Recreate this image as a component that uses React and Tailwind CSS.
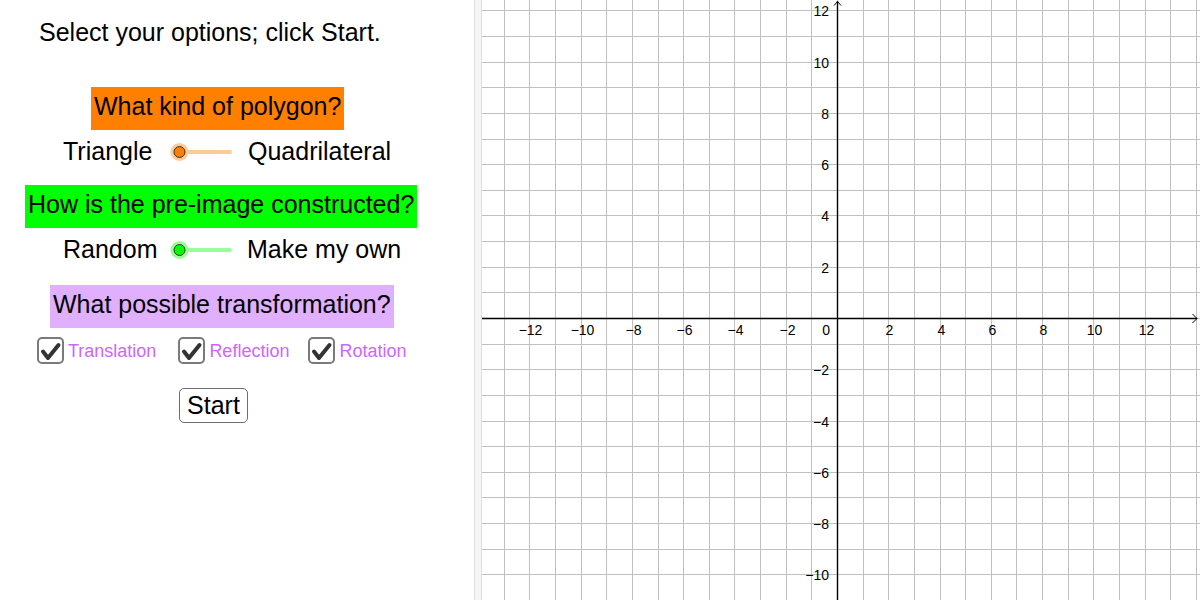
import React from 'react';

// graph geometry (pixels inside the graphics view)
const UNIT = 25.63;
const OX = 355;
const OY = 318;
const W = 718;
const H = 600;

const fmt = n => (n < 0 ? '\u2212' + Math.abs(n) : String(n));

const Slider = ({ knob, track }) => (
    <svg width="66" height="22" viewBox="0 0 66 22" className="shrink-0">
        <line x1="10.5" y1="11" x2="61" y2="11" stroke={track} strokeWidth="4" strokeLinecap="round" />
        <circle cx="10.5" cy="11" r="9" fill={track} />
        <circle cx="10.5" cy="11" r="5.5" fill={knob} stroke="#333" strokeWidth="1" />
    </svg>
);

const Check = ({ label, className = '' }) => (
    <div className={`flex items-center gap-[4px] ${className}`}>
        <svg width="27" height="27" viewBox="0 0 27 27" className="shrink-0">
            <rect x="1" y="1" width="25" height="25" rx="4" fill="white" stroke="#7a7a7a" strokeWidth="2" />
            <path d="M6 14.5 L11 21 L21.5 8" fill="none" stroke="#333" strokeWidth="4" strokeLinecap="round" strokeLinejoin="round" />
        </svg>
        <span className="text-[18px] leading-[21px] text-[#cc66ff] pt-[2px]">{label}</span>
    </div>
);

const Graph = () => {
    const cols = [];
    const rows = [];
    for (let i = -15; i <= 15; i++) {
        const x = Math.round(OX + i * UNIT) + 0.5;
        if (x > 0 && x < W) cols.push({ i, x });
        const y = Math.round(OY - i * UNIT) + 0.5;
        if (y > 0 && y < H) rows.push({ i, y });
    }
    const ax = Math.round(OX) + 0.5;
    const ay = Math.round(OY) + 0.5;

    return (
        <svg width={W} height={H} viewBox={`0 0 ${W} ${H}`} className="block">
            {cols.map(c => (
                <line key={'c' + c.i} x1={c.x} y1="0" x2={c.x} y2={H} stroke="#c0c0c0" strokeWidth="1" />
            ))}
            {rows.map(r => (
                <line key={'r' + r.i} x1="0" y1={r.y} x2={W} y2={r.y} stroke="#c0c0c0" strokeWidth="1" />
            ))}

            {/* axes */}
            <line x1="0" y1={ay} x2="715" y2={ay} stroke="#000" strokeWidth="1.4" />
            <line x1={ax} y1="1" x2={ax} y2={H} stroke="#000" strokeWidth="1.4" />
            <path d={`M710.5 ${ay - 4.5} L715 ${ay} L710.5 ${ay + 4.5}`} fill="none" stroke="#000" strokeWidth="1" />
            <path d={`M${ax - 3.5} 5.5 L${ax} 1.5 L${ax + 3.5} 5.5`} fill="none" stroke="#000" strokeWidth="1" />

            {/* tick labels */}
            <g className="text-[14px]" fill="#000">
                {cols.filter(c => c.i !== 0 && c.i % 2 === 0 && Math.abs(c.i) <= 12).map(c => (
                    <text key={'xl' + c.i} x={c.x + 1} y="335" textAnchor="middle">{fmt(c.i)}</text>
                ))}
                {rows.filter(r => r.i !== 0 && r.i % 2 === 0).map(r => (
                    <text key={'yl' + r.i} x="347" y={r.y + 5} textAnchor="end">{fmt(r.i)}</text>
                ))}
                <text x="348" y="335" textAnchor="end">0</text>
            </g>
        </svg>
    );
};

export default function App() {
    return (
        <div className="flex w-[1200px] h-[600px] overflow-hidden bg-white text-black font-['Liberation_Sans',Arial,sans-serif]">
            {/* options panel */}
            <div className="w-[474px] shrink-0 flex flex-col items-start text-[25px] leading-[29px]">
                <p className="ml-[39px] mt-[18px] whitespace-nowrap">Select your options; click Start.</p>

                <div className="ml-[91px] mt-[40px] bg-[#ff7f00] px-[3px] pt-[5px] pb-[9px] whitespace-nowrap">
                    What kind of polygon?
                </div>
                <div className="ml-[63px] mt-[7px] flex items-center">
                    <span className="w-[106px] whitespace-nowrap">Triangle</span>
                    <Slider knob="#ff7f00" track="#ffcc99" />
                    <span className="ml-[13px] whitespace-nowrap">Quadrilateral</span>
                </div>

                <div className="ml-[25px] mt-[19px] bg-[#00ff00] px-[3px] pt-[5px] pb-[9px] whitespace-nowrap">
                    How is the pre-image constructed?
                </div>
                <div className="ml-[63px] mt-[7px] flex items-center">
                    <span className="w-[106px] whitespace-nowrap">Random</span>
                    <Slider knob="#00ff00" track="#99ff99" />
                    <span className="ml-[12px] whitespace-nowrap">Make my own</span>
                </div>

                <div className="ml-[50px] mt-[21px] bg-[#e0b0ff] px-[3px] pt-[5px] pb-[9px] whitespace-nowrap">
                    What possible transformation?
                </div>
                <div className="ml-[37px] mt-[9px] flex items-center">
                    <Check label="Translation" />
                    <Check label="Reflection" className="ml-[22px]" />
                    <Check label="Rotation" className="ml-[19px]" />
                </div>

                <button className="ml-[179px] mt-[24px] h-[35px] w-[69px] rounded-[5px] border border-[#6e6e6e] bg-white pb-[1px] text-[25px] leading-[29px] text-black">
                    Start
                </button>
            </div>

            {/* splitter */}
            <div className="w-[8px] shrink-0 h-full bg-[#f5f5f5] border-x border-[#dedede]" />

            {/* graphics view */}
            <div className="flex-1 h-full">
                <Graph />
            </div>
        </div>
    );
}
